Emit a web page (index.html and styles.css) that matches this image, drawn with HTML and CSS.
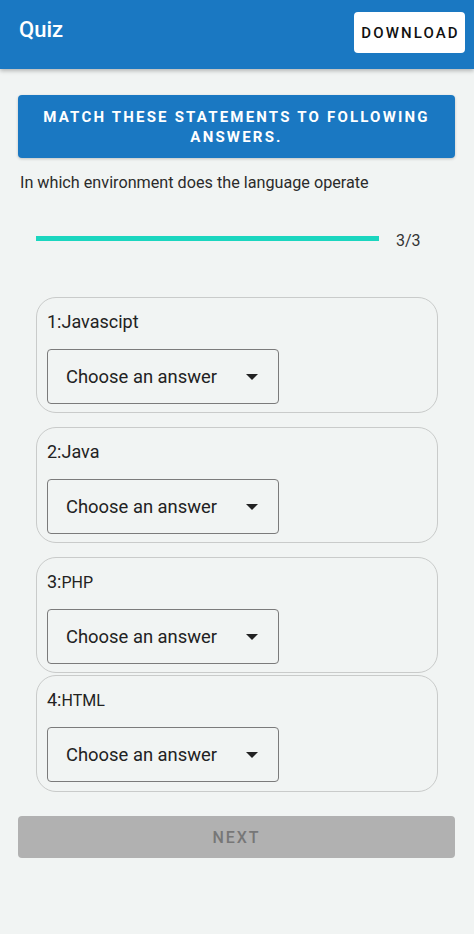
FILE: index.html
```html
<!DOCTYPE html>
<html>
<head>
<meta charset="utf-8">
<link rel="stylesheet" href="styles.css">
</head>
<body>
<header class="appbar">
  <div class="title">Quiz</div>
  <button class="download">DOWNLOAD</button>
</header>
<main class="content">
  <div class="banner">MATCH THESE STATEMENTS TO FOLLOWING ANSWERS.</div>
  <p class="question">In which environment does the language operate</p>
  <div class="progress-row">
    <div class="progress"><div class="progress-fill"></div></div>
    <span class="count">3/3</span>
  </div>
  <div class="cards">
    <div class="card">
      <div class="label">1:Javascipt</div>
      <div class="select"><span>Choose an answer</span><span class="arrow"></span></div>
    </div>
    <div class="card">
      <div class="label">2:Java</div>
      <div class="select"><span>Choose an answer</span><span class="arrow"></span></div>
    </div>
    <div class="card">
      <div class="label">3:<span class="small">PHP</span></div>
      <div class="select"><span>Choose an answer</span><span class="arrow"></span></div>
    </div>
    <div class="card tall tight">
      <div class="label">4:<span class="small">HTML</span></div>
      <div class="select"><span>Choose an answer</span><span class="arrow"></span></div>
    </div>
  </div>
  <button class="next">NEXT</button>
</main>
</body>
</html>
```
FILE: styles.css
```css
* { box-sizing: border-box; }
html, body {
  margin: 0;
  padding: 0;
  background: #f1f4f3;
  font-family: Roboto, "Liberation Sans", sans-serif;
  width: 474px;
  height: 934px;
  overflow: hidden;
}
.appbar {
  height: 69px;
  background: #1a78c2;
  display: flex;
  align-items: center;
  justify-content: space-between;
  padding: 0 9px 0 19px;
  box-shadow: 0 2px 4px rgba(0,0,0,0.25);
  position: relative;
}
.title {
  color: #fff;
  font-size: 22px;
  font-weight: 500;
  margin-top: -10px;
}
.download {
  width: 111px;
  height: 41px;
  margin-top: -4px;
  background: #fff;
  border: none;
  border-radius: 4px;
  font-family: Roboto, "Liberation Sans", sans-serif;
  font-size: 15px;
  font-weight: 500;
  letter-spacing: 2.1px;
  color: #111;
  padding: 0 0 0 2px;
}
.content {
  padding: 26px 0 0 0;
}
.banner {
  margin: 0 19px 0 18px;
  height: 63px;
  background: #1a78c2;
  border-radius: 4px;
  color: #fff;
  font-size: 15px;
  font-weight: 700;
  letter-spacing: 2.2px;
  line-height: 20px;
  text-align: center;
  padding: 12px 10px 0;
  box-shadow: 0 1px 3px rgba(0,0,0,0.2);
}
.question {
  margin: 15px 0 0 20px;
  font-size: 16.2px;
  line-height: 20px;
  color: #2b2b2b;
}
.progress-row {
  display: flex;
  align-items: center;
  margin: 35px 0 0 36px;
  height: 24px;
}
.progress {
  width: 343px;
  height: 5px;
  background: #c8f3ec;
  margin-top: -3px;
}
.progress-fill {
  width: 100%;
  height: 100%;
  background: #1bd6bf;
}
.count {
  margin-left: 17px;
  font-size: 16px;
  color: #333;
}
.cards {
  margin: 45px 0 0 36px;
  width: 402px;
}
.card {
  border: 1px solid #c9cbca;
  border-radius: 20px;
  padding: 13px 0 8px 10px;
  margin-bottom: 14px;
}
.card.tall {
  padding-bottom: 9px;
}
.card.tight {
  margin-top: -12px;
}
.label {
  font-size: 18px;
  line-height: 22px;
  height: 22px;
  color: #222;
}
.label .small {
  font-size: 16px;
}
.select {
  margin-top: 16px;
  width: 232px;
  height: 55px;
  border: 1px solid #7b7b7b;
  border-radius: 4px;
  display: flex;
  align-items: center;
  justify-content: space-between;
  padding: 0 20px 0 18px;
  font-size: 18.4px;
  color: #222;
}
.arrow {
  width: 0;
  height: 0;
  border-left: 6px solid transparent;
  border-right: 6px solid transparent;
  border-top: 6px solid #222;
}
.next {
  display: block;
  margin: 24px 0 0 18px;
  width: 437px;
  height: 42px;
  background: #b1b1b1;
  border: none;
  border-radius: 4px;
  color: #777;
  font-family: Roboto, "Liberation Sans", sans-serif;
  font-size: 16px;
  font-weight: 500;
  letter-spacing: 2px;
}
```
